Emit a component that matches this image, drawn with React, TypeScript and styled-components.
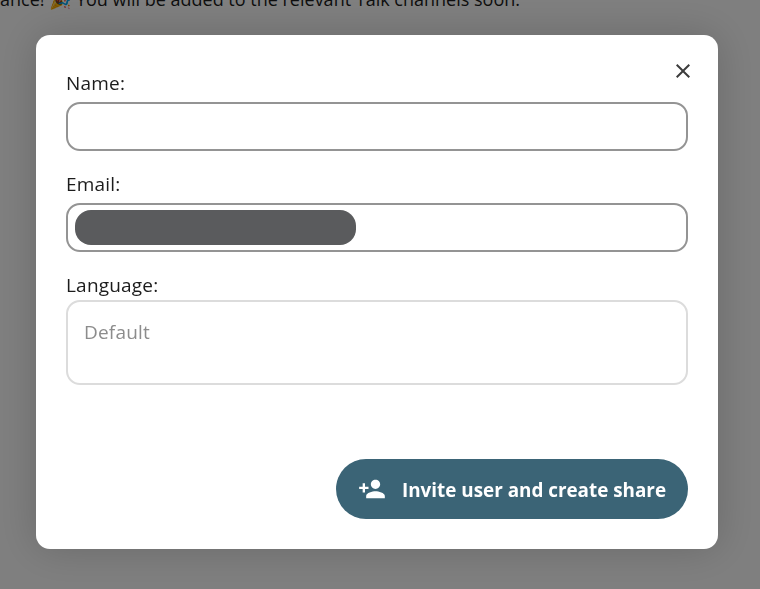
import React from 'react';
import styled, { createGlobalStyle } from 'styled-components';

const GlobalStyle = createGlobalStyle`
  html, body {
    margin: 0;
    padding: 0;
    height: 100%;
    background: #ffffff;
    overflow: hidden;
    font-family: "Open Sans", "Noto Sans", sans-serif;
  }
`;

const App: React.FC = () => {
  return (
    <>
      <GlobalStyle />
      <PageText>
        ance! 🎉 You will be added to the relevant Talk channels soon.
      </PageText>
      <Overlay>
        <Modal>
          <CloseButton aria-label="Close">
            <svg width="24" height="24" viewBox="0 0 24 24" fill="#3c3c3c">
              <path d="M19 6.41 17.59 5 12 10.59 6.41 5 5 6.41 10.59 12 5 17.59 6.41 19 12 13.41 17.59 19 19 17.59 13.41 12z" />
            </svg>
          </CloseButton>
          <Field>
            <Label>Name:</Label>
            <TextBox />
          </Field>
          <Field>
            <Label>Email:</Label>
            <TextBox>
              <Redaction />
            </TextBox>
          </Field>
          <Field>
            <Label>Language:</Label>
            <SelectBox>Default</SelectBox>
          </Field>
          <Footer>
            <InviteButton>
              <svg width="28" height="28" viewBox="0 0 24 24" fill="#ffffff">
                <path d="M15 12c2.21 0 4-1.79 4-4s-1.79-4-4-4-4 1.79-4 4 1.79 4 4 4zm-9-2V7H4v3H1v2h3v3h2v-3h3v-2H6zm9 4c-2.67 0-8 1.34-8 4v2h16v-2c0-2.66-5.33-4-8-4z" />
              </svg>
              <ButtonLabel>Invite user and create share</ButtonLabel>
            </InviteButton>
          </Footer>
        </Modal>
      </Overlay>
    </>
  );
};

const PageText = styled.div`
  margin-top: -13px;
  font-size: 18px;
  line-height: 24px;
  color: #1c1c1c;
  white-space: nowrap;
`;

const Overlay = styled.div`
  position: fixed;
  inset: 0;
  background: rgba(0, 0, 0, 0.5);
  display: flex;
  align-items: flex-start;
  justify-content: flex-start;
  padding: 35px 0 0 36px;
`;

const Modal = styled.div`
  position: relative;
  box-sizing: border-box;
  width: 682px;
  height: 514px;
  padding: 35px 30px 30px;
  background: #ffffff;
  border-radius: 14px;
  box-shadow: 0 0 40px rgba(0, 0, 0, 0.18);
  display: flex;
  flex-direction: column;
`;

const CloseButton = styled.button`
  position: absolute;
  top: 24px;
  right: 23px;
  width: 24px;
  height: 24px;
  padding: 0;
  border: 0;
  background: none;
  cursor: pointer;
`;

const Field = styled.div`
  display: flex;
  flex-direction: column;
  margin-bottom: 20px;
`;

const Label = styled.label`
  font-size: 19px;
  line-height: 26px;
  height: 32px;
  letter-spacing: 0.2px;
  color: #1c1c1c;
`;

const TextBox = styled.div`
  box-sizing: border-box;
  height: 49px;
  border: 2px solid #949494;
  border-radius: 14px;
  background: #ffffff;
  padding: 5px 7px;
`;

const Redaction = styled.div`
  width: 281px;
  height: 35px;
  border-radius: 16px;
  background: #5a5b5d;
`;

const SelectBox = styled.div`
  box-sizing: border-box;
  height: 85px;
  margin-top: -4px;
  padding: 17px 16px 0;
  border: 2px solid #dcdcdc;
  border-radius: 14px;
  font-size: 19px;
  line-height: 27px;
  letter-spacing: 0.2px;
  color: #8c8c8c;
`;

const Footer = styled.div`
  margin-top: auto;
  display: flex;
  justify-content: flex-end;
`;

const InviteButton = styled.button`
  box-sizing: border-box;
  width: 352px;
  height: 60px;
  display: flex;
  align-items: center;
  gap: 16px;
  padding: 0 0 0 22px;
  border: 0;
  border-radius: 30px;
  background: #3b6476;
  color: #ffffff;
  font-family: "Open Sans", "Noto Sans", sans-serif;
  font-size: 18.85px;
  font-weight: 700;
  white-space: nowrap;
  cursor: pointer;
`;

const ButtonLabel = styled.span`
  padding-top: 2px;
`;

export default App;
